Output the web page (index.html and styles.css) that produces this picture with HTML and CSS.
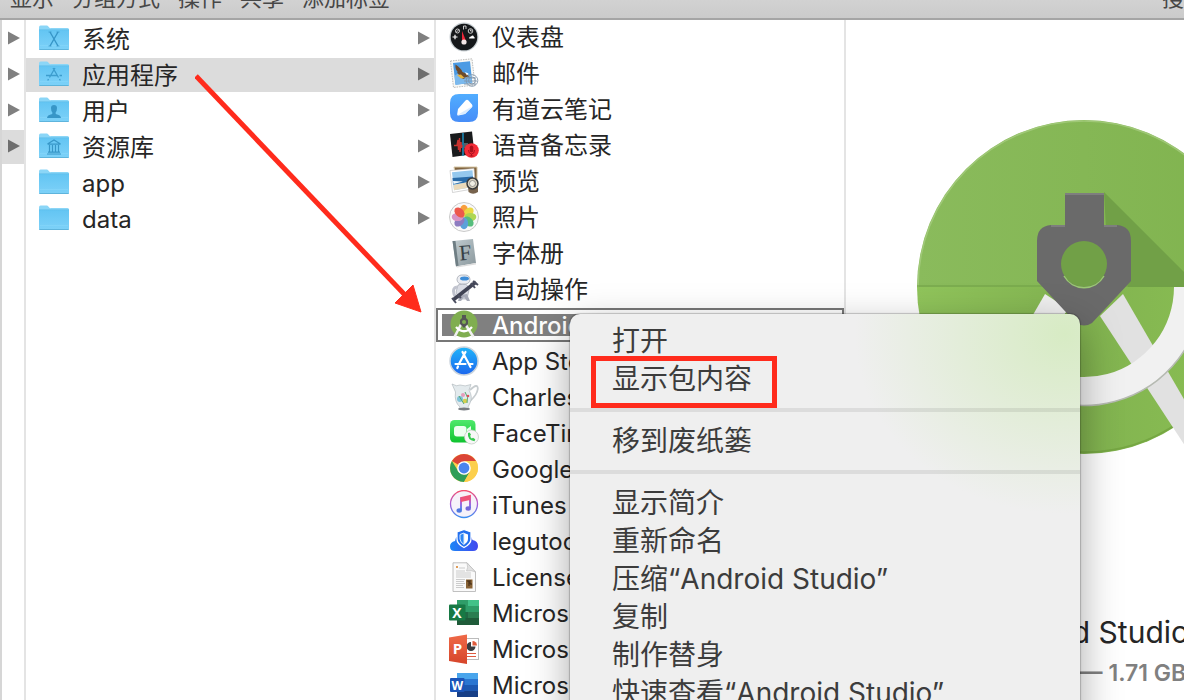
FILE: index.html
```html
<!DOCTYPE html>
<html lang="zh-CN">
<head>
<meta charset="utf-8">
<title>访达</title>
<link rel="stylesheet" href="styles.css">
</head>
<body>
<svg class="defs" aria-hidden="true">
  <defs>
    <linearGradient id="fold" x1="0" y1="0" x2="0" y2="1"><stop offset="0" stop-color="#63c5f3"/><stop offset="1" stop-color="#7dd1f8"/></linearGradient>
    <linearGradient id="blue" x1="0" y1="0" x2="0" y2="1"><stop offset="0" stop-color="#1fb5fa"/><stop offset="1" stop-color="#1c66ee"/></linearGradient>
    <linearGradient id="note" x1="0" y1="0" x2="0" y2="1"><stop offset="0" stop-color="#51adff"/><stop offset="1" stop-color="#468df8"/></linearGradient>
    <linearGradient id="green" x1="0" y1="0" x2="0" y2="1"><stop offset="0" stop-color="#4fe96c"/><stop offset="1" stop-color="#0fc32f"/></linearGradient>
    <linearGradient id="tune" x1="0" y1="0" x2="0" y2="1"><stop offset="0" stop-color="#f4506f"/><stop offset=".5" stop-color="#a95bd8"/><stop offset="1" stop-color="#3d8ff0"/></linearGradient>
    <linearGradient id="cloud" x1="0" y1="0" x2="1" y2="0"><stop offset="0" stop-color="#1d86f6"/><stop offset="1" stop-color="#4148ef"/></linearGradient>
    <linearGradient id="book" x1="0" y1="0" x2="1" y2="1"><stop offset="0" stop-color="#c3ced2"/><stop offset="1" stop-color="#8a979c"/></linearGradient>
    <linearGradient id="ppt" x1="0" y1="0" x2="0" y2="1"><stop offset="0" stop-color="#ef6a48"/><stop offset="1" stop-color="#d6452a"/></linearGradient>
    <linearGradient id="discTop" x1="0" y1="0" x2="1" y2="0"><stop offset="0" stop-color="#8abb5c"/><stop offset="1" stop-color="#80b34e"/></linearGradient>
    <linearGradient id="discLow" x1="0" y1="0" x2="1" y2="0"><stop offset="0" stop-color="#90c45b"/><stop offset=".5" stop-color="#82b350"/><stop offset="1" stop-color="#8ac053"/></linearGradient>
    <symbol id="tri" viewBox="0 0 12 14"><path d="M0 0.5 12 7 0 13.5z"/></symbol>
    <symbol id="folder" viewBox="0 0 30 26">
      <path d="M0 2.500Q0 .5 1.500.5H8Q9 .5 9.800 2T12 3H28.500Q30 3 30 4.500V24.500H0z" fill="#8bd6f7"/>
      <path d="M0 5H30V23.500Q30 24.500 29 24.500H1Q0 24.500 0 23.500z" fill="url(#fold)"/>
      <path d="M0 4.700H30" stroke="#5bb8e6" stroke-width=".6"/><path d="M.3 24.500H29.700" stroke="#4ca9d4" stroke-width=".8"/><path d="M1 20.500H29" stroke="#8ad8fb" stroke-width=".5"/>
    </symbol>
  </defs>
</svg>

<div class="window">
  <header class="toolbar">
    <span>显示</span><span>分组方式</span><span>操作</span><span>共享</span><span>添加标签</span><span class="search">搜索</span>
  </header>
  <main class="browser">
    <nav class="column root" aria-label="上级">
      <button class="row" type="button" aria-label="项目 1"><svg class="tri"><use href="#tri"/></svg></button>
      <button class="row" type="button" aria-label="项目 2"><svg class="tri"><use href="#tri"/></svg></button>
      <button class="row" type="button" aria-label="项目 3"><svg class="tri"><use href="#tri"/></svg></button>
      <button class="row selected" type="button" aria-label="项目 4"><svg class="tri"><use href="#tri"/></svg></button>
    </nav>

    <nav class="column folders" aria-label="文件夹">
      <button class="row" type="button"><svg class="folder" viewBox="0 0 30 26"><use href="#folder"/><g fill="none" stroke="#3695c7" stroke-width="1.200"><path d="M11 7 19 21M19 7 11 21" stroke-width="1.400"/><path d="M9.500 7H12.500M17.500 7H20.500M9.500 21H12.500M17.500 21H20.500" stroke-width=".7"/></g></svg><span>系统</span><svg class="tri"><use href="#tri"/></svg></button>
      <button class="row selected" type="button"><svg class="folder" viewBox="0 0 30 26"><use href="#folder"/><path d="M16 7 10.500 16.500M14 7 19.500 16.500M7 14.500H18M20.500 14.500H23M9.500 18 8.700 19.500M20.500 18 21.300 19.500" fill="none" stroke="#3c9dce" stroke-width="1.300"/></svg><span>应用程序</span><svg class="tri"><use href="#tri"/></svg></button>
      <button class="row" type="button"><svg class="folder" viewBox="0 0 30 26"><use href="#folder"/><path d="M15 8Q18 8 18 11 18 14 16.700 15.300V17Q22 18.200 22 21H8Q8 18.200 13.300 17V15.300Q12 14 12 11 12 8 15 8z" fill="#3796c7"/></svg><span>用户</span><svg class="tri"><use href="#tri"/></svg></button>
      <button class="row" type="button"><svg class="folder" viewBox="0 0 30 26"><use href="#folder"/><path d="M8.500 11 15 7 21.500 11M8.500 11.200H21.500M10.500 12V19M13.500 12V19M16.500 12V19M19.500 12V19M9 19.200H21M8 21H22" fill="none" stroke="#3796c7" stroke-width="1.200"/></svg><span>资源库</span><svg class="tri"><use href="#tri"/></svg></button>
      <button class="row" type="button"><svg class="folder" viewBox="0 0 30 26"><use href="#folder"/></svg><span>app</span><svg class="tri"><use href="#tri"/></svg></button>
      <button class="row" type="button"><svg class="folder" viewBox="0 0 30 26"><use href="#folder"/></svg><span>data</span><svg class="tri"><use href="#tri"/></svg></button>
    </nav>

    <nav class="column apps" aria-label="应用程序">
      <button class="row" type="button"><svg class="icon" viewBox="0 0 30 30"><circle cx="15" cy="15" r="14.500" fill="#c9d0d4"/><circle cx="15" cy="15" r="13.300" fill="#15181a"/><g fill="none" stroke="#ddd" stroke-width=".9"><circle cx="8.500" cy="9" r="2"/><path d="M7 10.500 10 7.500M14.500 7.500V4H17V7"/><circle cx="21.500" cy="9" r="2.300"/><path d="M21.500 7.500V9H23"/></g><path d="M3.500 15H8.500M6 12.700V17.300" stroke="#fff" stroke-width="1.200"/><path d="M20 16.500Q20 14.500 22 14.500 24 12.500 25 15 26.500 15.500 25.500 16.500z" fill="#fff"/><path d="M13 9 17.300 19.500 13 20z" fill="#ed2638"/><circle cx="15" cy="20" r="2.600" fill="#f2e6e6"/></svg><span>仪表盘</span></button>
      <button class="row" type="button"><svg class="icon" viewBox="0 0 30 30"><path d="M1.500 3 23 .8 26 27 4.500 29.500z" fill="#f8f8f5" stroke="#a9aaa8" stroke-width=".8" stroke-dasharray="1.500 1"/><path d="M4 5 21 3.300 23.300 24.700 6.500 26.700z" fill="#4b9be4"/><path d="M5.500 18Q12 12 22 17L23.300 24.700 6.500 26.700z" fill="#7bb9ed"/><path d="M6.500 6.500Q12 10 13.500 14L18 16 21 19.500 17 19 15 21Q10 20 9.500 16 7.500 15 8.500 13.500 6 11 6.500 6.500z" fill="#6b4b2e"/><path d="M8 17 12 16.500 15.500 20 12 20.500z" fill="#e8b53f"/><path d="M16 14 19.500 15.500 18 17.500z" fill="#fff"/><g fill="none" stroke="#7f95ab" stroke-width=".9"><circle cx="23" cy="22.500" r="5.800"/><circle cx="23" cy="22.500" r="3.500"/><path d="M15 20H27M15 23H28M15 26H27"/></g></svg><span>邮件</span></button>
      <button class="row" type="button"><svg class="icon" viewBox="0 0 30 30"><path d="M10 0H29V19Q29 28 20 28H10Q1 28 1 19V9Q1 0 10 0z" fill="url(#note)"/><path d="M9 15 16.500 6.500Q18 5.200 19.500 6.500L23 10.500Q24 12 23 13.200L16 20 9.500 21.500Q8 22 8.200 20z" fill="#fff"/><path d="M8.300 21 23.500 12 16 20z" fill="#dcecff"/></svg><span>有道云笔记</span></button>
      <button class="row" type="button"><svg class="icon" viewBox="0 0 30 30"><path d="M1 4 23 1.500 25.500 24 3.500 27z" fill="#191b1d"/><path d="M14 3V26" stroke="#1d8ab7" stroke-width="1.600"/><path d="M5 15.500H8L9 10 9.500 20 10.500 8 11 22 12 12 12.500 18 13 15" fill="none" stroke="#c8332f" stroke-width="1.400"/><path d="M15 13H19V18H15" fill="#555f65"/><circle cx="22.500" cy="20.500" r="7.300" fill="#f32c37"/><rect x="20.800" y="15.500" width="3.400" height="7" rx="1.700" fill="#a9111d"/><path d="M19.500 20Q19.500 24 22.500 24T25.500 20M22.500 24V26M20.500 26H24.500" fill="none" stroke="#a9111d"/></svg><span>语音备忘录</span></button>
      <button class="row" type="button"><svg class="icon" viewBox="0 0 30 30"><path d="M5 1H28V18H8z" fill="#80633e" stroke="#d8c9a8"/><path d="M1 4.500 25 2.500 26.500 22.500 3.500 26.500z" fill="#fff" stroke="#bbb" stroke-width=".6"/><path d="M3 6.300 23.500 4.300 24.800 20.800 5 24.300z" fill="#94c8ee"/><path d="M3.500 12 24 10.500 24.300 15.500 4 18.500z" fill="#296ba8"/><path d="M4.500 19 24.300 15 24.800 20.800 5 24.300z" fill="#ead9b9"/><path d="M4 15 14 15.500 4.500 18z" fill="#eff8fc"/><path d="M19 20H29V26Q24 29.500 19.500 26z" fill="#77634d"/><circle cx="23.500" cy="17.500" r="5.500" fill="#d8d1bf" stroke="#3a3c3d" stroke-width="1.500"/><circle cx="23.500" cy="17.500" r="3" fill="#f0eee4" stroke="#777" stroke-width=".7"/></svg><span>预览</span></button>
      <button class="row" type="button"><svg class="icon" viewBox="0 0 30 30"><circle cx="15" cy="15" r="14.500" fill="#f9f9f9" stroke="#c9c9c9"/><g opacity=".92"><ellipse cx="15" cy="8.600" rx="4.100" ry="5.900" fill="#f8982c"/><ellipse cx="15" cy="8.600" rx="4.100" ry="5.900" fill="#e9d635" transform="rotate(45 15 15)"/><ellipse cx="15" cy="8.600" rx="4.100" ry="5.900" fill="#a9d445" transform="rotate(90 15 15)"/><ellipse cx="15" cy="8.600" rx="4.100" ry="5.900" fill="#49b873" transform="rotate(135 15 15)"/><ellipse cx="15" cy="8.600" rx="4.100" ry="5.900" fill="#4e9bd8" transform="rotate(180 15 15)"/><ellipse cx="15" cy="8.600" rx="4.100" ry="5.900" fill="#8472bc" transform="rotate(225 15 15)"/><ellipse cx="15" cy="8.600" rx="4.100" ry="5.900" fill="#d58cc2" transform="rotate(270 15 15)"/><ellipse cx="15" cy="8.600" rx="4.100" ry="5.900" fill="#ed4b3e" transform="rotate(315 15 15)"/></g></svg><span>照片</span></button>
      <button class="row" type="button"><svg class="icon" viewBox="0 0 30 30"><path d="M3.500 3 24 1 27 25 7 28.500z" fill="url(#book)"/><path d="M3.500 3 6.500 3 9.500 27.500 7 28.500z" fill="#6f7e84"/><path d="M7 28.500 27 25V26.500L8 29.500z" fill="#ddd"/><text x="10" y="22" font-family="Liberation Serif, serif" font-size="22" fill="#364146" transform="rotate(-5 15 15)">F</text></svg><span>字体册</span></button>
      <button class="row" type="button"><svg class="icon" viewBox="0 0 30 30"><path d="M9 11Q19 7 20 16L18 25H10L7 18z" fill="#dadce4" stroke="#969aa7" stroke-width=".6"/><path d="M8 13Q3 14 5 20L7 24" fill="none" stroke="#c0c3ce" stroke-width="3"/><path d="M11 21 9 27H12L15 23 18 27H21L18 20z" fill="#a7aab7"/><rect x="8" y="1" width="13" height="9" rx="4.500" fill="#ebedf2" stroke="#8e939e" stroke-width=".6"/><ellipse cx="15.500" cy="4.500" rx="4.500" ry="2" fill="#3e8dd7"/><path d="M4 26 27 8" stroke="#404354" stroke-width="3.500"/><path d="M3 24 7 29M22 9 26 14M24 7 29 11M9 21 12 24" stroke="#4b4e60" stroke-width="2"/></svg><span>自动操作</span></button>
      <button class="row chosen" type="button"><svg class="icon" viewBox="0 0 30 30"><circle cx="15" cy="14" r="13.500" fill="#80ae50"/><path d="M5.500 27 14 10.500 24.500 27" fill="none" stroke="#f1f1f1" stroke-width="2.600"/><path d="M7 17Q15 25.500 23 17" fill="none" stroke="#fff" stroke-width="2.300"/><path d="M13 5H17V8L19 10V14L15 18 11 14V10L13 8z" fill="#555"/><circle cx="15" cy="12" r="2" fill="#80ae50"/></svg><span>Android Studio</span></button>
      <button class="row" type="button"><svg class="icon" viewBox="0 0 30 30"><circle cx="15" cy="15" r="14" fill="url(#blue)" stroke="#cbd4dd" stroke-width="1.500"/><path d="M16.500 6 10.200 17.500M13.500 6 21.500 21M6.500 18H16.500M20 18H23.500M9 20.500 8.300 22" fill="none" stroke="#fff" stroke-width="2.200" stroke-linecap="round"/></svg><span>App Store</span></button>
      <button class="row" type="button"><svg class="icon" viewBox="0 0 30 30"><path d="M21 8Q29 .5 28.800 7 28 13 21 19" fill="none" stroke="#c7cdd0" stroke-width="1.800"/><path d="M3 2Q8 5 11 3 16 5 22 2.500L20 8Q24 15 21 21L19 25 20 27H10L11 25Q5 20 6.500 10z" fill="#e3eaed" stroke="#b1babf" stroke-width=".7"/><ellipse cx="15" cy="27" rx="6" ry="1.500" fill="#777b80"/><circle cx="14" cy="13" r="2" fill="#e69bbb"/><circle cx="11" cy="17" r="3" fill="#7fc3d8"/><circle cx="16" cy="19" r="2.300" fill="#d4cf50"/><path d="M16 10Q20 15 18 21M10 14 15 22" fill="none" stroke="#55a76e"/><circle cx="19" cy="14" r="1.300" fill="#dd4f5c"/></svg><span>Charles</span></button>
      <button class="row" type="button"><svg class="icon" viewBox="0 0 30 30"><rect x="1" y="2" width="25.500" height="22.500" rx="4.500" fill="url(#green)"/><rect x="5" y="8" width="12.500" height="10.500" rx="3" fill="#edfff0"/><path d="M18 11 22 8V18L18 15z" fill="#e4ffe8"/><circle cx="22.500" cy="19" r="7" fill="#f7f7f7" stroke="#bfc5bf" stroke-width=".7"/><path d="M19 15Q18 22 25.500 23.200L26.300 21.300 24 19.800 22.800 20.500Q21 19.500 21.300 17.500L22 16.500 20.500 14.500z" fill="#35c94e"/></svg><span>FaceTime</span></button>
      <button class="row" type="button"><svg class="icon" viewBox="0 0 30 30"><circle cx="15" cy="14" r="14" fill="#fccf4c"/><path d="M15 14 2.900 7A14 14 0 0 1 27.100 7z" fill="#db4437"/><path d="M15 28A14 14 0 0 1 2.900 7L9.300 17.300Q12 21 17.500 20.500L20.500 18z" fill="#2f9e58"/><path d="M15 7H27.100A14 14 0 0 1 15 28L21.500 17z" fill="#fccf4c"/><circle cx="15" cy="14" r="6.800" fill="#fff"/><circle cx="15" cy="14" r="5.400" fill="#4a84ed"/></svg><span>Google Chrome</span></button>
      <button class="row" type="button"><svg class="icon" viewBox="0 0 30 30"><circle cx="15" cy="14" r="13.500" fill="#f6f2fa" stroke="url(#tune)" stroke-width="1.300"/><path d="M12 20V8L21 6V18" fill="none" stroke="url(#tune)" stroke-width="1.900"/><path d="M12 8 21 6V10L12 12z" fill="#ef5377"/><ellipse cx="10.200" cy="20.500" rx="2.700" ry="2.200" fill="#4f78df"/><ellipse cx="19.200" cy="18.500" rx="2.700" ry="2.200" fill="#7667da"/></svg><span>iTunes</span></button>
      <button class="row" type="button"><svg class="icon" viewBox="0 0 30 30"><path d="M6 25Q1 25 1 20.500 1 16 6 15 7 8 15 8 22 8 23.500 14 29 15 29 20 29 25 24 25z" fill="url(#cloud)"/><path d="M15 3.500 22 6V13Q22 18 15 21.500 8 18 8 13V6z" fill="#2270ef" stroke="#fff" stroke-width="1.300"/><path d="M15 7 19 8.500V13Q19 16 15 18.500z" fill="#fff"/><path d="M15 7 11 8.500V13Q11 16 15 18.500z" fill="#2b86f4" stroke="#d8ebff" stroke-width="1"/></svg><span>legutools</span></button>
      <button class="row" type="button"><svg class="icon" viewBox="0 0 30 30"><path d="M4 .8H18L26.500 10V29.500H4z" fill="#fafafa" stroke="#b9b9b9" stroke-width=".9"/><path d="M18 .8Q19.500 6 17.500 9 23 8 26.500 10z" fill="#e2e2e2" stroke="#b9b9b9" stroke-width=".6"/><path d="M7 5H9" stroke="#df9c59" stroke-width="2"/><path d="M10 6H16M7 9H16M7 11H22M7 13H22M7 15H22M7 17.500H16M7 19.500H15M7 21.500H16M7 23.500H14M7 25.500H15" stroke="#c0c0c0" stroke-width=".8"/><rect x="17" y="17.500" width="6.500" height="9" fill="#886235"/><path d="M18 19H20V24M21 18V22H23" stroke="#3f2815" fill="none"/></svg><span>License</span></button>
      <button class="row" type="button"><svg class="icon" viewBox="0 0 30 30"><path d="M8 2H30V27H8z" fill="#2f9d68"/><path d="M19 2H30V8H19z" fill="#42c288"/><path d="M19 14H30V20H19z" fill="#2a7d50"/><path d="M8 14H19V20H8z" fill="#206843"/><path d="M8 20H30V27H8z" fill="#1f5b39"/><rect x="0" y="6.500" width="16.500" height="16" rx="1" fill="#177944"/><text x="8" y="19.500" text-anchor="middle" font-family="Open Sans, sans-serif" font-weight="700" font-size="14" fill="#fff">X</text></svg><span>Microsoft Excel</span></button>
      <button class="row" type="button"><svg class="icon" viewBox="0 0 30 30"><rect x="16" y="4.500" width="13.500" height="21" fill="#fff" stroke="#bbb"/><path d="M22 8A4.500 4.500 0 1 0 26.500 12.500H22z" fill="#393d40"/><path d="M23.500 7A4.500 4.500 0 0 1 28 11.500H23.500z" fill="#e05a3b"/><path d="M18 19.500H27M18 22.500H27" stroke="#de5a40" stroke-width="1.200"/><path d="M0 3.500 18 .5V30L0 27z" fill="url(#ppt)"/><text x="8.500" y="20" text-anchor="middle" font-family="Open Sans, sans-serif" font-weight="700" font-size="15" fill="#fff">P</text></svg><span>Microsoft PowerPoint</span></button>
      <button class="row" type="button"><svg class="icon" viewBox="0 0 30 30"><path d="M8 3H29V27H8z" fill="#2b76d1"/><path d="M8 3H29V9H8z" fill="#49a5ec"/><path d="M8 15H29V21H8z" fill="#1d58b1"/><path d="M8 21H29V27H8z" fill="#173f87"/><rect x="1" y="8" width="14.500" height="14" rx="1" fill="#1b55b9"/><text x="8.200" y="19.500" text-anchor="middle" font-family="Open Sans, sans-serif" font-weight="700" font-size="12" fill="#fff">W</text></svg><span>Microsoft Word</span></button>
    </nav>

    <section class="preview">
      <svg class="logo" viewBox="0 0 336 360" role="img" aria-label="Android Studio">
        <path d="M1 168A167 167 0 0 1 335 168z" fill="url(#discTop)"/>
        <path d="M1 168A167 167 0 0 0 335 168z" fill="url(#discLow)"/>
        <path d="M2 168A166 166 0 0 1 334 168" fill="none" stroke="#a9cf85" stroke-width="1.500" opacity=".7"/>
        <path d="M12 224A166 166 0 0 0 324 224" fill="none" stroke="#76a743" stroke-width="2"/>
        <path d="M188 73 283 168H212L190 110z" fill="#71a047"/>
        <path d="M1 167H335" stroke="#70a046" stroke-width="1.500" opacity=".65"/>
        <path d="M129 175 40 329V344L57 335 152 190z" fill="#efefef"/>
        <path d="M207 175 324 377H302L184 197z" fill="#e1e1e1"/>
        <path d="M65 227A119 119 0 0 0 287 168H258A90 90 0 0 1 90 213z" fill="#f1f1f1"/>
        <path d="M287 168A119 119 0 0 1 65 227" fill="none" stroke="#b6bab2" stroke-width="1.500"/>
        <path d="M149 74H188V106H201Q215 107 215 122V162L176 204Q168 209 160 204L121 162V122Q121 107 135 106H149z" fill="#6a6a6a"/>
        <circle cx="168" cy="145" r="23" fill="#71a047"/>
        <path d="M149 75H188M135 107H149M188 107H201" stroke="#858585" stroke-width="1.500"/>
        <path d="M148 157A23 23 0 0 0 188 157" fill="none" stroke="#9ac873" stroke-width="1.500"/>
      </svg>
      <h1>Android Studio</h1>
      <p>应用程序 — 1.71 GB</p>
    </section>
  </main>

  <div class="menu" role="menu">
    <button type="button" role="menuitem">打开</button>
    <button type="button" role="menuitem" class="marked">显示包内容</button>
    <hr>
    <button type="button" role="menuitem">移到废纸篓</button>
    <hr>
    <button type="button" role="menuitem">显示简介</button>
    <button type="button" role="menuitem">重新命名</button>
    <button type="button" role="menuitem">压缩“Android Studio”</button>
    <button type="button" role="menuitem">复制</button>
    <button type="button" role="menuitem">制作替身</button>
    <button type="button" role="menuitem">快速查看“Android Studio”</button>
    <button type="button" role="menuitem">共享</button>
  </div>

  <svg class="arrow" viewBox="0 0 230 240" aria-hidden="true"><path d="M1 2 210 221" stroke="#ff2b1c" stroke-width="5" fill="none"/><path d="M226 238 218 211 200 229z" fill="#ff2b1c" stroke="#ff2b1c"/></svg>
</div>
</body>
</html>
```

FILE: styles.css
```css
*, *::after { box-sizing: border-box; }

body {
  margin: 0;
  background: #fff;
  color: #262626;
  font-family: Inter, "Noto Sans CJK SC", sans-serif;
}

button {
  border: 0;
  padding: 0;
  background: none;
  color: inherit;
  font: inherit;
  text-align: left;
}

.defs { position: absolute; width: 0; height: 0; }

.window {
  position: relative;
  display: flex;
  flex-direction: column;
  height: 100vh;
  overflow: hidden;
}

.toolbar {
  display: flex;
  flex: none;
  align-items: flex-end;
  gap: 18px;
  height: 20px;
  padding: 0 0 9px 10px;
  overflow: hidden;
  border-bottom: 2px solid #a5a5a5;
  background: linear-gradient(#d2d2d2, #cbcbcb);
  color: #474747;
  font-size: 22px;
  line-height: 22px;
  white-space: nowrap;
}
.toolbar .search { margin: 0 -22px 0 auto; }

.browser {
  display: flex;
  flex: 1;
  min-height: 0;
  border-left: 2px solid #d6d6d6;
}

.column {
  display: flex;
  flex: none;
  flex-direction: column;
  gap: 2px;
  overflow: hidden;
  border-right: 2px solid #e4e4e4;
  font-size: 24px;
  line-height: 30px;
  white-space: nowrap;
}
.root { width: 24px; padding-top: 2px; }
.folders { width: 410px; padding-top: 2px; }
.apps { width: 410px; }

.row {
  display: flex;
  flex: none;
  align-items: center;
  height: 34px;
}
.row span { padding-top: 2px; }
.root .row { padding-left: 6px; }
.folders .row { gap: 13px; padding: 0 4px 0 13px; }
.apps .row { gap: 13px; padding-left: 11px; border: 2px solid transparent; }
.row.selected { background: #dcdcdc; }
.apps .row.chosen {
  border-color: #777;
  background: #808080;
  box-shadow: inset 0 0 0 4px #fff;
  color: #fff;
  font-weight: 500;
}

.tri { width: 12px; height: 14px; margin-bottom: 2px; fill: #808080; }
.selected .tri { fill: #6e6e6e; }
.folders .tri { margin-left: auto; }
.folder { width: 30px; height: 26px; margin-bottom: 2px; }
.icon { width: 30px; height: 30px; }

.preview {
  display: flex;
  flex: 1 0 476px;
  flex-direction: column;
  align-items: center;
  padding-top: 99px;
}
.logo { width: 336px; height: 360px; overflow: visible; }
.preview h1 {
  margin: 132px 0 0;
  font-size: 30px;
  font-weight: 400;
  line-height: 42px;
}
.preview p {
  margin: 4px 0 0;
  color: #808080;
  font-size: 23px;
  font-weight: 600;
  line-height: 32px;
}

.menu {
  position: absolute;
  top: 314px;
  left: 570px;
  display: flex;
  flex-direction: column;
  width: 510px;
  padding: 7px 0;
  border-radius: 10px;
  background:
    radial-gradient(ellipse 210px 180px at 97% 20px, #d7ebc4, #d7ebc400),
    #efefef;
  box-shadow: 0 0 1px 1px rgba(0, 0, 0, .2), 0 14px 40px rgba(0, 0, 0, .35);
  color: #3c3c3c;
  font-size: 28px;
  line-height: 36px;
  white-space: nowrap;
}
.menu button { height: 38px; padding: 2px 0 0 42px; }
.menu hr {
  width: 100%;
  height: 4px;
  margin: 11px 0 9px;
  border: 0;
  background: rgba(0, 0, 0, .08);
}
.menu .marked { position: relative; }
.marked::after {
  content: "";
  position: absolute;
  top: -3px;
  left: 21px;
  width: 186px;
  height: 52px;
  border: 5px solid #ff2b1c;
}

.arrow {
  position: absolute;
  top: 74px;
  left: 195px;
  width: 230px;
  height: 240px;
  pointer-events: none;
}
```
